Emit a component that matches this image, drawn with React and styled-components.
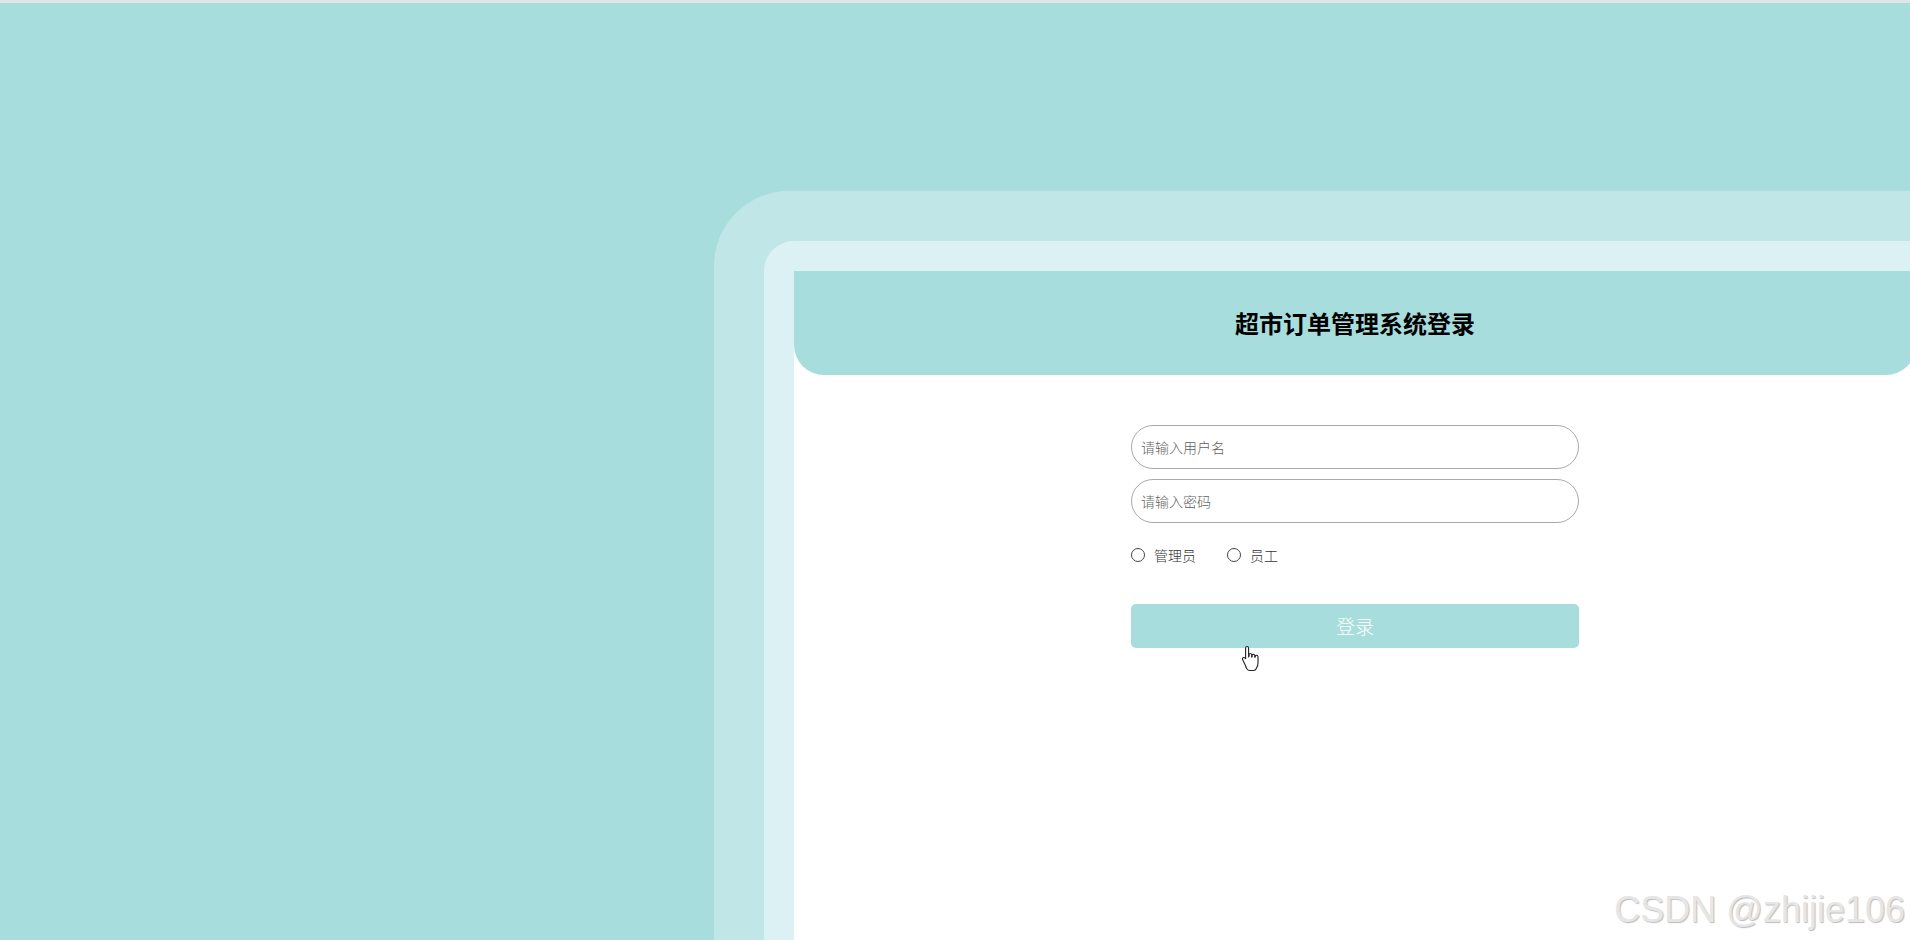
import React from "react";
import styled, { createGlobalStyle } from "styled-components";

const Global = createGlobalStyle`
  html, body { margin: 0; padding: 0; height: 100%; overflow: hidden; }
  body { background: #a7dddc; font-family: "Noto Sans CJK SC", "Liberation Sans", sans-serif; }
  * { box-sizing: border-box; }
`;

const Page = styled.div`
  position: relative;
  width: 1910px;
  height: 940px;
  overflow: hidden;
  border-top: 3px solid #dfe6e8;
  padding: 188px 0 0 714px;
  background: #a7dddc;
`;

const Outer = styled.div`
  width: 1282px;
  height: 900px;
  padding: 50px 50px 0;
  border-radius: 75px 75px 0 0;
  background: #c1e6e8;
`;

const Middle = styled.div`
  height: 100%;
  padding: 30px 30px 0;
  border-radius: 30px 30px 0 0;
  background: #dcf1f3;
`;

const Card = styled.main`
  height: 100%;
  width: 1122px;
  background: #fff;
`;

const Header = styled.header`
  height: 104px;
  display: flex;
  align-items: center;
  justify-content: center;
  border-radius: 0 0 30px 30px;
  background: #a7dddc;
`;

const Title = styled.h1`
  margin: 0;
  font-size: 24px;
  line-height: 1;
  font-weight: 700;
  color: #000;
`;

const Form = styled.form`
  width: 448px;
  margin: 50px auto 0;
  display: flex;
  flex-direction: column;
`;

const Field = styled.input`
  height: 44px;
  margin-bottom: 10px;
  padding: 0 9px;
  border: 1px solid #a9a9a9;
  border-radius: 22px;
  background: #fff;
  outline: none;
  font: 300 14px "Noto Sans CJK SC", sans-serif;
  &::placeholder { color: #5f5f5f; opacity: 1; }
`;

const Roles = styled.div`
  display: flex;
  gap: 31px;
  height: 24px;
  margin-top: 10px;
  align-items: center;
`;

const Role = styled.label`
  display: flex;
  align-items: center;
  gap: 9px;
  font-size: 14px;
  font-weight: 300;
  color: #333;
`;

const Radio = styled.input`
  appearance: none;
  width: 14px;
  height: 14px;
  margin: 0;
  border: 1px solid #444;
  border-radius: 50%;
  background: #fff;
`;

const Submit = styled.button`
  height: 44px;
  margin-top: 37px;
  padding: 0 0 2px;
  border: none;
  border-radius: 5px;
  background: #a7dddc;
  color: #fff;
  font: 300 19px "Noto Sans CJK SC", sans-serif;
  cursor: pointer;
`;

const Cursor = styled.svg`
  position: absolute;
  left: 1241px;
  top: 642px;
  width: 20px;
  height: 27px;
`;

const Watermark = styled.div`
  position: absolute;
  right: 5px;
  bottom: 9px;
  font: 36px/1.2 "Liberation Sans", sans-serif;
  color: #e6e6e6;
  text-shadow: 1px 1px 1px #bcbcbc;
  white-space: nowrap;
`;

export default function App() {
  return (
    <Page>
      <Global />
      <Outer>
        <Middle>
          <Card>
            <Header>
              <Title>超市订单管理系统登录</Title>
            </Header>
            <Form onSubmit={(e) => e.preventDefault()}>
              <Field type="text" placeholder="请输入用户名" />
              <Field type="password" placeholder="请输入密码" />
              <Roles>
                <Role><Radio type="radio" name="role" />管理员</Role>
                <Role><Radio type="radio" name="role" />员工</Role>
              </Roles>
              <Submit type="submit">登录</Submit>
            </Form>
          </Card>
        </Middle>
      </Outer>
      <Cursor viewBox="0 0 20 27" aria-hidden="true">
        <path
          d="M6 1.5c1 0 1.6.7 1.6 1.7v8.3l.5-.2V9.7c0-1.6 2.4-1.6 2.6 0v2l.5-.1v-1.2c0-1.5 2.4-1.5 2.6 0v1.6l.5-.1v-.6c0-1.5 2.6-1.5 2.7.2v6.5c0 2.3-.6 3.6-1.5 5.2-.5 1-1.5 2.3-3 2.3H8.500c-1.200 0-2-.8-2.700-1.800-.7-1-1-2-1.500-3.500L1.600 14.600c-.8-1.700 1.200-2.800 2.400-1.600l.6.7V3.200c0-1 .5-1.700 1.400-1.700z"
          fill="#fff"
          stroke="#222"
          strokeWidth="1.1"
          strokeLinejoin="round"
        />
        <path d="M7.600 11.500v1M10.700 11.500v1M13.800 11.500v1" stroke="#222" strokeWidth="0.9" fill="none" />
      </Cursor>
      <Watermark>CSDN @zhijie106</Watermark>
    </Page>
  );
}
